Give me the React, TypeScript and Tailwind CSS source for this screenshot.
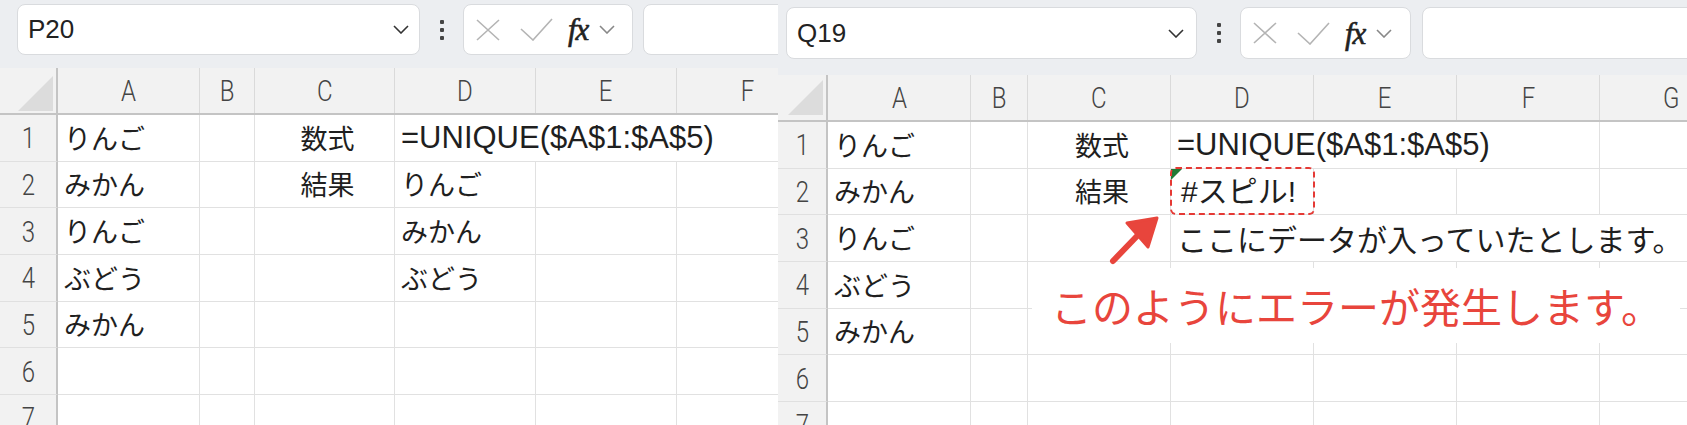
import React from "react"

type Cell = { w: string; text?: string; cls?: string; extra?: React.ReactNode }
type Col = { w: string; label: string }

const jp = "font-['Noto_Sans_CJK_JP',sans-serif] text-[27px]"
const latin = "font-['Liberation_Sans','Noto_Sans_CJK_JP',sans-serif] text-[31px]"
const mid = "font-['Noto_Sans_CJK_JP',sans-serif] text-[27px] justify-center"
const headFont = "inline-block scale-x-[0.8] font-['Roboto',sans-serif] font-light text-[30px] text-[#444]"

function Chevron({ className }: { className?: string }) {
  return (
    <svg width="16" height="9" viewBox="0 0 16 9" className={className}>
      <polyline points="1,1 8,8 15,1" fill="none" stroke="currentColor" strokeWidth="1.6" />
    </svg>
  )
}

function Dots() {
  return (
    <div className="w-[43px] h-full flex flex-col items-center justify-center gap-[4px]">
      <span className="w-[4px] h-[4px] bg-[#444] rounded-[1px]" />
      <span className="w-[4px] h-[4px] bg-[#444] rounded-[1px]" />
      <span className="w-[4px] h-[4px] bg-[#444] rounded-[1px]" />
    </div>
  )
}

function FxIcons() {
  return (
    <>
      <svg width="24" height="22" viewBox="0 0 24 22" className="shrink-0">
        <path d="M1 1 L23 21 M23 1 L1 21" stroke="#b4b4b4" strokeWidth="1.6" fill="none" />
      </svg>
      <svg width="33" height="23" viewBox="0 0 33 23" className="shrink-0 ml-[20px]">
        <polyline points="1,11 13,22 32,1" stroke="#b4b4b4" strokeWidth="1.6" fill="none" />
      </svg>
      <span className="ml-[15px] font-['Liberation_Serif',serif] italic text-[31px] leading-none text-[#222] tracking-[-1px] [-webkit-text-stroke:0.6px_#222]">
        fx
      </span>
      <Chevron className="ml-[11px] text-[#888] w-[16px] h-[9px]" />
    </>
  )
}

function Toolbar({ side, name }: { side: "left" | "right"; name: string }) {
  const left = side === "left"
  return (
    <div
      className={
        left
          ? "h-[68px] shrink-0 bg-[#eceef1] flex items-start pt-[4px] pl-[17px]"
          : "h-[75px] shrink-0 bg-[#eceef1] flex items-start pt-[7px] pl-[8px]"
      }
    >
      <div
        className={
          left
            ? "w-[403px] h-[51px] shrink-0 rounded-[8px] bg-white border border-[#d9dbde] flex items-center justify-between pl-[10px] pr-[10px]"
            : "w-[411px] h-[52px] shrink-0 rounded-[8px] bg-white border border-[#d9dbde] flex items-center justify-between pl-[10px] pr-[12px]"
        }
      >
        <span className="font-['Liberation_Sans',sans-serif] text-[26px] text-[#222]">{name}</span>
        <Chevron className="text-[#333]" />
      </div>
      <div className={left ? "h-[51px]" : "h-[52px]"}>
        <Dots />
      </div>
      <div
        className={
          left
            ? "w-[170px] h-[51px] shrink-0 rounded-[8px] bg-white border border-[#d9dbde] flex items-center pl-[12px]"
            : "w-[171px] h-[52px] shrink-0 rounded-[8px] bg-white border border-[#d9dbde] flex items-center pl-[12px]"
        }
      >
        <FxIcons />
      </div>
      <div
        className={
          left
            ? "ml-[10px] w-[400px] h-[51px] shrink-0 rounded-[8px] bg-white border border-[#d9dbde]"
            : "ml-[11px] w-[400px] h-[52px] shrink-0 rounded-[8px] bg-white border border-[#d9dbde]"
        }
      />
    </div>
  )
}

function HeadRow({ headW, cols, tri }: { headW: string; cols: Col[]; tri: string }) {
  return (
    <div className="flex h-[47px] shrink-0 bg-[#f2f2f2] border-b-2 border-b-[#c4c4c4]">
      <div className={`${headW} shrink-0 relative border-r-2 border-r-[#c4c4c4]`}>
        <svg width="35" height="35" viewBox="0 0 35 35" className={`absolute ${tri}`}>
          <polygon points="35,0 35,35 0,35" fill="#dcdcdc" />
        </svg>
      </div>
      {cols.map((c) => (
        <div key={c.label} className={`${c.w} shrink-0 flex items-center justify-center border-r border-r-[#dadada]`}>
          <span className={headFont}>{c.label}</span>
        </div>
      ))}
    </div>
  )
}

function GridRow({ head, headW, cells }: { head: string; headW: string; cells: Cell[] }) {
  return (
    <div className="flex h-[46.7px] shrink-0">
      <div className={`${headW} shrink-0 flex items-center justify-center bg-[#f2f2f2] border-r-2 border-r-[#c4c4c4] border-b border-b-[#e0e0e0]`}>
        <span className={headFont}>{head}</span>
      </div>
      {cells.map((c, i) => (
        <div
          key={i}
          className={`${c.w} shrink-0 relative flex items-center pl-[6px] border-r border-b border-[#e1e1e1] whitespace-nowrap text-[#1f1f1f] ${c.cls ?? jp}`}
        >
          {c.extra}
          {c.text}
        </div>
      ))}
    </div>
  )
}

const leftCols: Col[] = [
  { w: "w-[142px]", label: "A" },
  { w: "w-[55px]", label: "B" },
  { w: "w-[140px]", label: "C" },
  { w: "w-[141px]", label: "D" },
  { w: "w-[141px]", label: "E" },
  { w: "w-[141px]", label: "F" },
]

const rightCols: Col[] = [
  { w: "w-[143px]", label: "A" },
  { w: "w-[57px]", label: "B" },
  { w: "w-[143px]", label: "C" },
  { w: "w-[143px]", label: "D" },
  { w: "w-[143px]", label: "E" },
  { w: "w-[143px]", label: "F" },
  { w: "w-[143px]", label: "G" },
]

function leftRow(a: string, c: string, d: string): Cell[] {
  return [
    { w: "w-[142px]", text: a },
    { w: "w-[55px]" },
    { w: "w-[140px]", text: c, cls: mid },
    { w: "w-[141px]", text: d },
    { w: "w-[141px]" },
    { w: "w-[141px]" },
  ]
}

const leftRows: Cell[][] = [
  [
    { w: "w-[142px]", text: "りんご" },
    { w: "w-[55px]" },
    { w: "w-[140px]", text: "数式", cls: mid },
    { w: "w-[423px]", text: "=UNIQUE($A$1:$A$5)", cls: latin },
  ],
  leftRow("みかん", "結果", "りんご"),
  leftRow("りんご", "", "みかん"),
  leftRow("ぶどう", "", "ぶどう"),
  leftRow("みかん", "", ""),
  leftRow("", "", ""),
  leftRow("", "", ""),
]

function rightRow(a: string): Cell[] {
  return [
    { w: "w-[143px]", text: a },
    { w: "w-[57px]" },
    { w: "w-[143px]" },
    { w: "w-[143px]" },
    { w: "w-[143px]" },
    { w: "w-[143px]" },
    { w: "w-[143px]" },
  ]
}

const rightRows: Cell[][] = [
  [
    { w: "w-[143px]", text: "りんご" },
    { w: "w-[57px]" },
    { w: "w-[143px]", text: "数式", cls: mid },
    { w: "w-[429px]", text: "=UNIQUE($A$1:$A$5)", cls: latin },
    { w: "w-[143px]" },
  ],
  [
    { w: "w-[143px]", text: "みかん" },
    { w: "w-[57px]" },
    { w: "w-[143px]", text: "結果", cls: mid },
    {
      w: "w-[143px]",
      text: "#スピル!",
      cls: "font-['Liberation_Sans','Noto_Sans_CJK_JP',sans-serif] text-[30px] pl-[10px]",
      extra: (
        <svg width="11" height="11" viewBox="0 0 11 11" className="absolute left-0 top-0">
          <polygon points="0,0 11,0 0,11" fill="#217a36" />
        </svg>
      ),
    },
    { w: "w-[143px]" },
    { w: "w-[143px]" },
    { w: "w-[143px]" },
  ],
  [
    { w: "w-[143px]", text: "りんご" },
    { w: "w-[57px]" },
    { w: "w-[143px]" },
    { w: "w-[572px]", text: "ここにデータが入っていたとします。", cls: "font-['Noto_Sans_CJK_JP',sans-serif] text-[30px]" },
  ],
  rightRow("ぶどう"),
  rightRow("みかん"),
  rightRow(""),
  rightRow(""),
]

export default function App() {
  return (
    <div className="flex w-[1687px] h-[425px] overflow-hidden bg-white">
      <div className="w-[778px] h-[425px] shrink-0 flex flex-col overflow-hidden">
        <Toolbar side="left" name="P20" />
        <HeadRow headW="w-[58px]" cols={leftCols} tri="left-[18px] top-[8px]" />
        {leftRows.map((r, i) => (
          <GridRow key={i} head={String(i + 1)} headW="w-[58px]" cells={r} />
        ))}
      </div>

      <div className="relative w-[909px] h-[425px] shrink-0 flex flex-col overflow-hidden">
        <Toolbar side="right" name="Q19" />
        <HeadRow headW="w-[50px]" cols={rightCols} tri="left-[10px] top-[5px]" />
        {rightRows.map((r, i) => (
          <GridRow key={i} head={String(i + 1)} headW="w-[50px]" cells={r} />
        ))}

        {/* spill range outline */}
        <div className="absolute left-[392px] top-[167px] w-[145px] h-[48px] rounded-[6px] border-2 border-dashed border-[#e53935]" />

        {/* arrow */}
        <svg width="66" height="60" viewBox="0 0 66 60" className="absolute left-[325px] top-[210px]">
          <line x1="10" y1="51" x2="36" y2="24" stroke="#e8453c" strokeWidth="6" strokeLinecap="round" />
          <polygon points="54,8 24,13 45,37" fill="#e8453c" stroke="#e8453c" strokeWidth="3" strokeLinejoin="round" />
        </svg>

        {/* callout */}
        <div className="absolute left-[254px] top-[268px] w-[648px] h-[75px] bg-white flex items-center pl-[19px]">
          <span className="font-['Noto_Sans_CJK_JP',sans-serif] text-[41px] leading-none text-[#e8453c] whitespace-nowrap">
            このようにエラーが発生します。
          </span>
        </div>
      </div>
    </div>
  )
}
